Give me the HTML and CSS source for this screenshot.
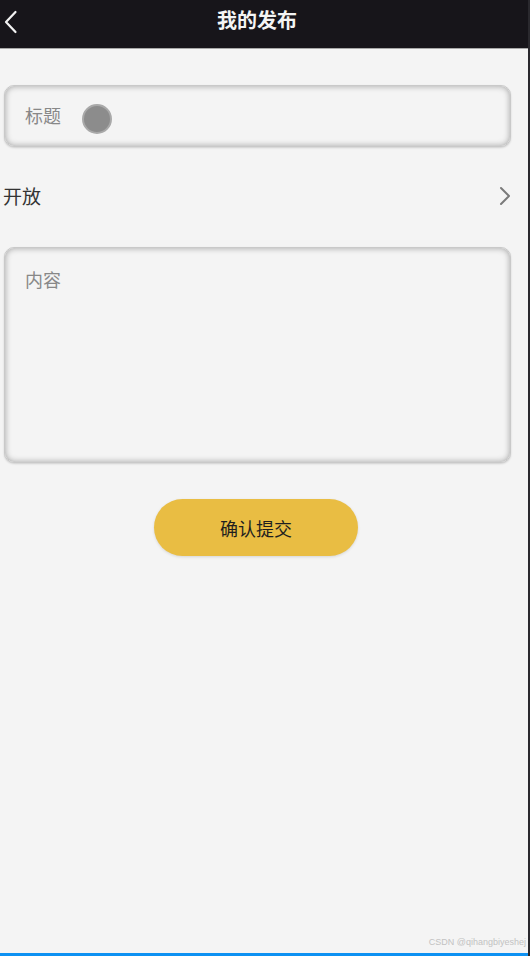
FILE: index.html
```html
<!DOCTYPE html>
<html lang="zh">
<head>
<meta charset="utf-8">
<title>我的发布</title>
<link rel="stylesheet" href="styles.css">
</head>
<body>
<div class="app">
  <header class="topbar">
    <svg class="back" width="16" height="24" viewBox="0 0 16 24"><path d="M12.5 2 L3 12 L12.5 22" fill="none" stroke="#f2f2f2" stroke-width="2.2" stroke-linecap="round" stroke-linejoin="round"/></svg>
    <h1 class="title">我的发布</h1>
  </header>
  <main class="content">
    <div class="field field-title">
      <span class="placeholder">标题</span>
      <span class="dot"></span>
    </div>
    <div class="row">
      <span class="row-label">开放</span>
      <svg class="chev" width="12" height="20" viewBox="0 0 12 20"><path d="M2 2 L10 10 L2 18" fill="none" stroke="#7a7a7a" stroke-width="2" stroke-linecap="round" stroke-linejoin="round"/></svg>
    </div>
    <div class="field field-body">
      <span class="placeholder">内容</span>
    </div>
    <div class="actions">
      <button class="submit">确认提交</button>
    </div>
  </main>
  <div class="spacer"></div>
  <div class="watermark">CSDN @qihangbiyeshej</div>
  <div class="bottombar"></div>
</div>
</body>
</html>
```
FILE: styles.css
```css
* { box-sizing: border-box; }
html, body { margin: 0; padding: 0; }
body {
  background: #f4f4f4;
  font-family: "Noto Sans CJK SC", "Noto Sans", sans-serif;
  width: 530px;
  height: 956px;
  overflow: hidden;
}
.app {
  width: 530px;
  height: 956px;
  display: flex;
  flex-direction: column;
  border-right: 2px solid #2a292e;
}
.topbar {
  height: 49px;
  background: #17151a;
  border-bottom: 1px solid #a8a8a8;
  display: flex;
  align-items: center;
  position: relative;
  width: 528px;
}
.back {
  margin-left: 3px;
  margin-top: -4px;
}
.title {
  position: absolute;
  left: 0;
  width: 514px;
  top: 0;
  margin: 0;
  line-height: 40px;
  text-align: center;
  color: #f4f4f4;
  font-size: 20px;
  font-weight: 700;
}
.content {
  width: 514px;
  display: flex;
  flex-direction: column;
}
.field {
  margin: 0 3px 0 4px;
  background: #f4f4f4;
  border-radius: 10px;
  border: 1px solid #c9c9c9;
  box-shadow: inset 0 0 6px rgba(0,0,0,0.35), 0 1px 2px rgba(0,0,0,0.15);
}
.field-title {
  margin-top: 36px;
  height: 62px;
  display: flex;
  align-items: center;
  padding-left: 20px;
}
.placeholder {
  color: #888;
  font-size: 18px;
  line-height: 24px;
}
.field-title .placeholder { margin-top: -2px; }
.dot {
  width: 30px;
  height: 30px;
  border-radius: 50%;
  background: #8c8c8c;
  border: 2px solid #a9a9a9;
  margin-left: 21px;
  margin-top: 6px;
}
.row {
  margin-top: 23px;
  height: 50px;
  display: flex;
  align-items: center;
  justify-content: space-between;
  padding-left: 3px;
  padding-right: 3px;
}
.row-label {
  color: #333;
  font-size: 19px;
}
.chev { margin-top: 2px; }
.field-body {
  margin-top: 27px;
  height: 216px;
  padding: 19px 20px;
}
.actions {
  margin-top: 36px;
  display: flex;
  justify-content: center;
  padding-right: 2px;
}
.submit {
  width: 204px;
  height: 57px;
  border: none;
  border-radius: 29px;
  background: #e9bd43;
  color: #1f1f1f;
  font-family: "Noto Sans CJK SC", sans-serif;
  font-size: 18px;
  box-shadow: 0 1px 3px rgba(0,0,0,0.12);
}
.spacer { flex: 1; }
.watermark {
  text-align: right;
  font-family: "Liberation Sans", Arial, sans-serif;
  font-size: 9px;
  color: #c2c2c2;
  padding-right: 2px;
  line-height: 12px;
  margin-bottom: 5px;
}
.bottombar {
  height: 3px;
  background: #0d91f2;
}
```
